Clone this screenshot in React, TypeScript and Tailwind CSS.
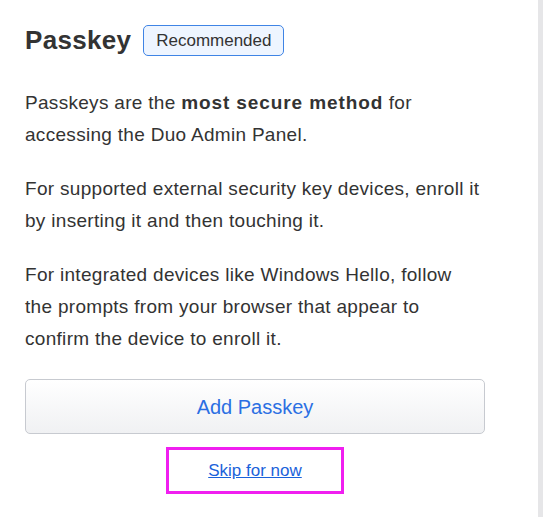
import React from 'react';

export default function App() {
  return (
    <div className="flex h-[517px] w-[543px] bg-white font-['Liberation_Sans',Arial,sans-serif] text-[#333]">
      <div className="w-[538px] pl-[25px] pt-[25px]">
        {/* Heading */}
        <div className="flex items-center gap-[12px]">
          <h1 className="text-[26px] font-bold leading-[31px] tracking-[0.3px] text-[#333]">Passkey</h1>
          <span className="inline-flex h-[31px] items-center rounded-[5px] border border-[#3f84e5] bg-[#eef5ff] px-[12px] text-[17px] text-[#333]">
            Recommended
          </span>
        </div>

        {/* Description */}
        <div className="mt-[31px] w-[480px] text-[19px] leading-[32px] tracking-[0.3px]">
          <p>
            Passkeys are the <strong className="font-bold tracking-[0.9px]">most secure method</strong> for
            <br />
            accessing the Duo Admin Panel.
          </p>
          <p className="mt-[22px]">
            For supported external security key devices, enroll it
            <br />
            by inserting it and then touching it.
          </p>
          <p className="mt-[22px]">
            For integrated devices like Windows Hello, follow
            <br />
            the prompts from your browser that appear to
            <br />
            confirm the device to enroll it.
          </p>
        </div>

        {/* Actions */}
        <div className="mt-[24px] w-[460px]">
          <button className="flex h-[55px] w-full items-center justify-center rounded-[5px] border border-[#c7cad0] bg-gradient-to-b from-white to-[#f0f1f3] text-[20px] text-[#2b6fe3]">
            Add Passkey
          </button>
          <div className="mt-[13px] flex justify-center">
            <a
              href="#"
              className="flex h-[47px] w-[178px] items-center justify-center border-[3px] border-[#f01ff0] text-[17px] text-[#1a62da] underline"
            >
              Skip for now
            </a>
          </div>
        </div>
      </div>
      <div className="flex-1 bg-[#e6e6e8]" />
    </div>
  );
}
